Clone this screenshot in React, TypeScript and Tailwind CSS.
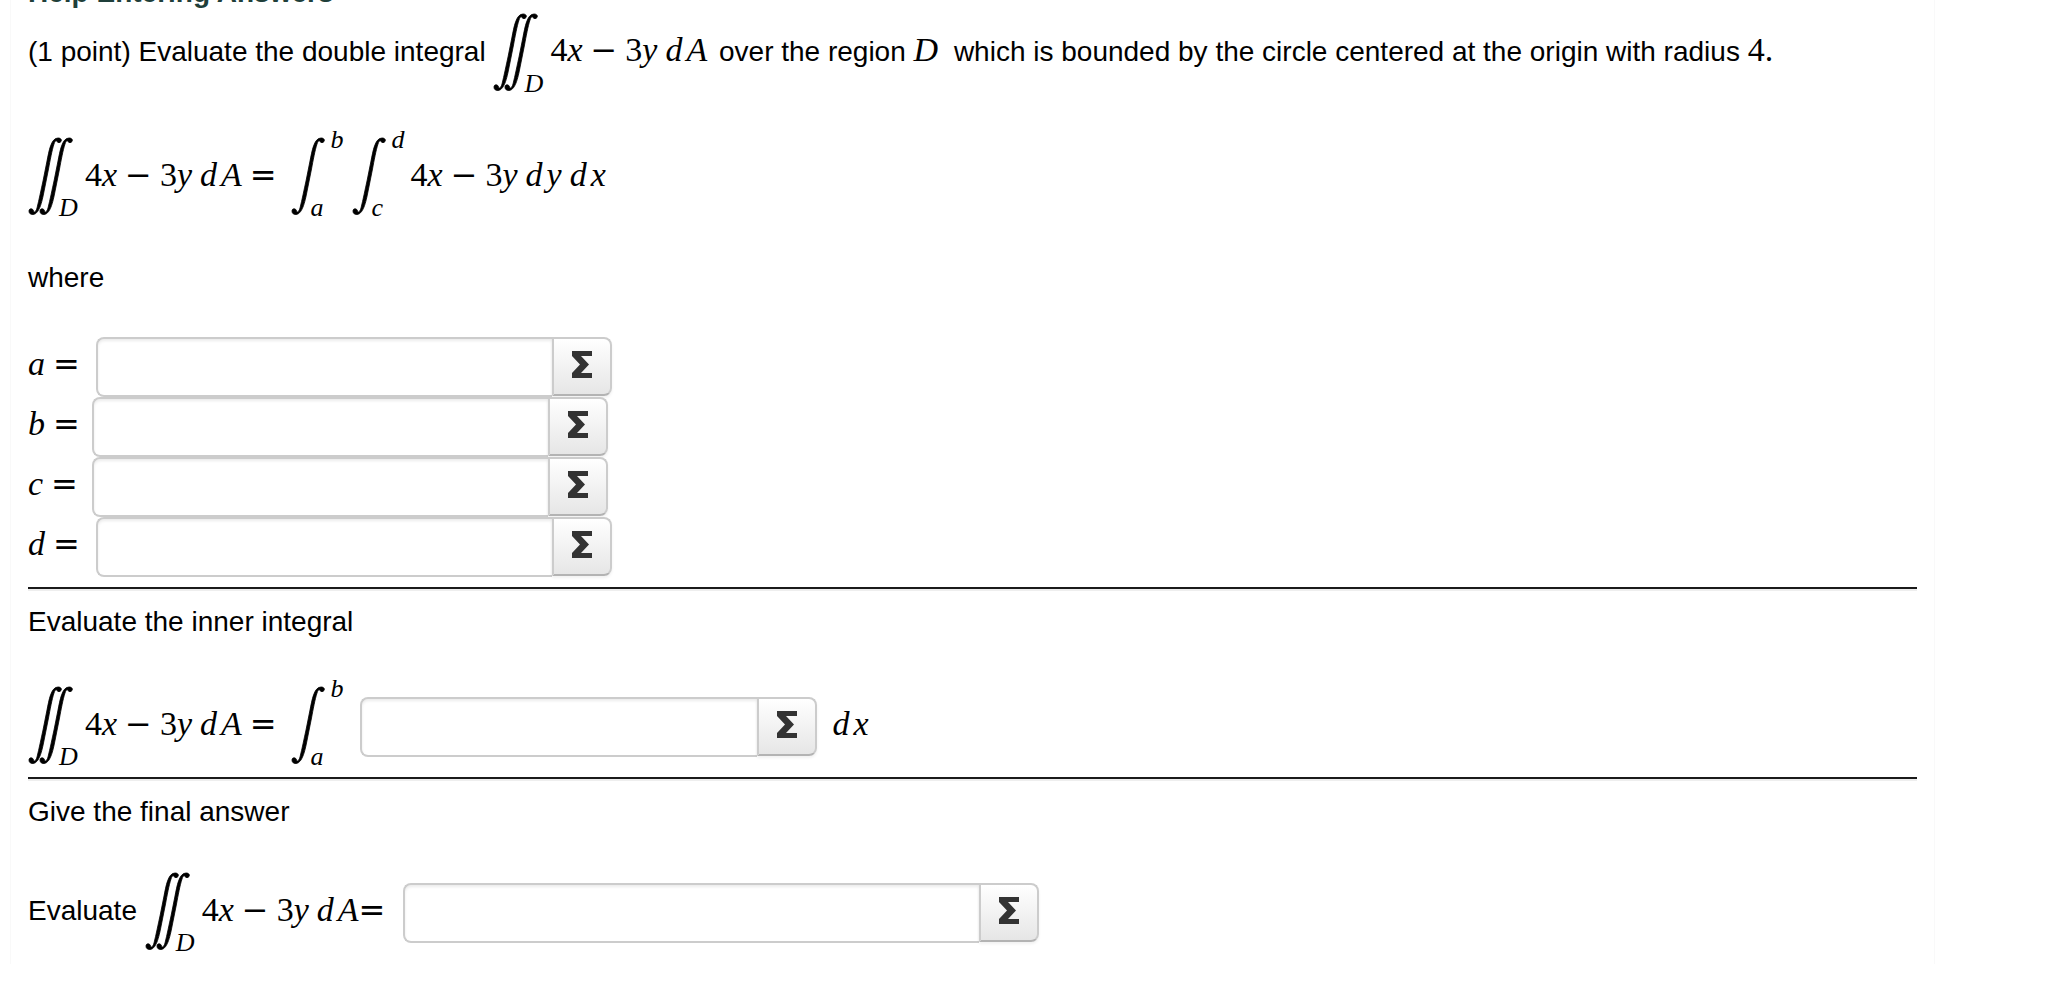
import { useState, type ReactNode } from 'react';

const SANS = "font-['Liberation_Sans',Arial,sans-serif] text-[28px]";
const SERIF = "font-['Liberation_Serif','Times_New_Roman',serif] text-[34px]";

function Words({ children }: { children: ReactNode }) {
    return <span className={SANS}>{children}</span>;
}

function MathText({ children }: { children: ReactNode }) {
    return <span className={`${SERIF} shrink-0 whitespace-pre pb-1.5 leading-[40px]`}>{children}</span>;
}

function Op({ children, tight = false }: { children: ReactNode; tight?: boolean }) {
    return (
        <span className={`font-['DejaVu_Sans',sans-serif] text-[32px] leading-none ${tight ? '' : 'mx-2'}`}>
            {children}
        </span>
    );
}

function Integrand() {
    return (
        <>
            4<i>x</i>
            <Op>−</Op>3<i>y</i>
        </>
    );
}

function Differential({ of }: { of: string }) {
    return (
        <i className="ml-2">
            d<span className="ml-1">{of}</span>
        </i>
    );
}

const STROKE =
    'M1 75 C1 72 5 72 5.5 75 C6 77 8 76 9 72 C11 64 13 54 15 45 L19 25 C21 15 23 2 30 2 C33 2 34 4 33 5.5 C32 7 30 7 29 5.5 C28 4 27 5 26 8 C24 14 22 25 20.5 33 L16.5 53 C14.5 63 12 78 5 78.5 C2 78.5 1 77 1 75Z';

function Integral({ double = false, lower, upper }: { double?: boolean; lower: string; upper?: string }) {
    return (
        <span className="flex shrink-0 pb-1">
            <svg
                width={double ? 45 : 34}
                height="80"
                viewBox={double ? '0 0 45 80' : '0 0 34 80'}
                stroke="black"
                strokeWidth="0.8"
                aria-hidden="true"
            >
                <path d={STROKE} />
                {double && <path d={STROKE} transform="translate(11 0)" />}
            </svg>
            <span className="-mt-2 -mb-1 -ml-3.5 flex flex-col justify-between font-['Liberation_Serif','Times_New_Roman',serif] text-[26px] leading-6 italic">
                <span className="ml-5">{upper}</span>
                <span>{lower}</span>
            </span>
        </span>
    );
}

interface AnswerProps {
    id: string;
    label: string;
    width: string;
}

function Answer({ id, label, width }: AnswerProps) {
    const [value, setValue] = useState('');

    return (
        <span className="flex h-[60px] shrink-0 items-start">
            <input
                id={id}
                type="text"
                aria-label={label}
                value={value}
                onChange={(e) => setValue(e.target.value)}
                className={`${width} h-[60px] rounded-l-lg border-2 border-r-0 border-[#ccc] bg-white px-3 text-[28px] shadow-[inset_0_2px_3px_rgba(0,0,0,0.08)] outline-none`}
            />
            <button
                type="button"
                aria-label={`Open equation editor for ${label}`}
                className="flex h-[59px] w-[60px] items-center justify-center rounded-r-lg border-2 border-[#ccc] border-b-[#b3b3b3] bg-linear-to-b from-white to-[#e6e6e6] pb-1 shadow-[0_2px_3px_rgba(0,0,0,0.06)]"
            >
                <svg width="20" height="27" viewBox="0 0 20 27" fill="#333" aria-hidden="true">
                    <path d="M0 0H20V5H9L17 13.5L9 22H20V27H0V22L8 13.5L0 5Z" />
                </svg>
            </button>
        </span>
    );
}

function Rule() {
    return <hr className="h-1 border-t-2 border-b-2 border-t-[#1a1a1a] border-b-[#eee]" />;
}

const BOUNDS = [
    { name: 'a', gap: 'gap-2' },
    { name: 'b', gap: 'gap-1' },
    { name: 'c', gap: 'gap-1.5' },
    { name: 'd', gap: 'gap-2' },
];

export default function App() {
    return (
        <div className="min-h-screen overflow-hidden bg-white pr-[137px] pl-2.5 text-black">
            <main className="min-h-screen border-x border-[#f9f9f9] px-[17px]">
                <a
                    href="#help"
                    className="-mt-6 -mb-px block font-['Liberation_Sans',Arial,sans-serif] text-[28px] leading-[34px] font-bold text-[#1f3f3a]"
                >
                    Help Entering Answers
                </a>

                <div className="flex h-[90px] items-center">
                    <MathText>
                        <Words>(1 point) Evaluate the double integral </Words>
                    </MathText>
                    <Integral double lower="D" />
                    <span className="w-1.5" />
                    <MathText>
                        <Integrand />
                        <Differential of="A" />
                        <span className="ml-1">
                            <Words> over the region </Words>
                        </span>
                        <i className="mr-1">D</i>
                        <span className="ml-1">
                            <Words> which is bounded by the circle centered at the origin with radius </Words>
                        </span>
                        4.
                    </MathText>
                </div>

                <div className="mt-[34px] flex h-[90px] items-center">
                    <Integral double lower="D" />
                    <span className="w-1.5" />
                    <MathText>
                        <Integrand />
                        <Differential of="A" />
                        <Op>=</Op>
                    </MathText>
                    <span className="w-1.5" />
                    <Integral lower="a" upper="b" />
                    <span className="w-2" />
                    <Integral lower="c" upper="d" />
                    <span className="w-1.5" />
                    <MathText>
                        <Integrand />
                        <Differential of="y" />
                        <Differential of="x" />
                    </MathText>
                </div>

                <p className={`${SANS} mt-[35px] mb-[39px] leading-[40px]`}>where</p>

                {BOUNDS.map(({ name, gap }) => (
                    <div key={name} className={`flex items-center ${gap}`}>
                        <label htmlFor={`bound-${name}`} className="flex">
                            <MathText>
                                <i>{name}</i>
                                <Op>=</Op>
                            </MathText>
                        </label>
                        <Answer id={`bound-${name}`} label={name} width="w-[456px]" />
                    </div>
                ))}

                <div className="mt-2.5">
                    <Rule />
                </div>
                <p className={`${SANS} mt-[11px] leading-[40px]`}>Evaluate the inner integral</p>

                <div className="mt-10 flex h-[90px] items-center">
                    <Integral double lower="D" />
                    <span className="w-1.5" />
                    <MathText>
                        <Integrand />
                        <Differential of="A" />
                        <Op>=</Op>
                    </MathText>
                    <span className="w-1.5" />
                    <Integral lower="a" upper="b" />
                    <span className="w-4" />
                    <Answer id="inner" label="inner integral" width="w-[397px]" />
                    <span className="w-2" />
                    <MathText>
                        <Differential of="x" />
                    </MathText>
                </div>

                <div className="mt-[5px]">
                    <Rule />
                </div>
                <p className={`${SANS} mt-[11px] leading-[40px]`}>Give the final answer</p>

                <div className="mt-9 flex h-[90px] items-center">
                    <MathText>
                        <Words>Evaluate </Words>
                    </MathText>
                    <Integral double lower="D" />
                    <span className="w-1.5" />
                    <MathText>
                        <Integrand />
                        <Differential of="A" />
                        <Op tight>=</Op>
                    </MathText>
                    <span className="w-[18px]" />
                    <Answer id="final" label="final answer" width="w-[576px]" />
                </div>
            </main>
        </div>
    );
}
